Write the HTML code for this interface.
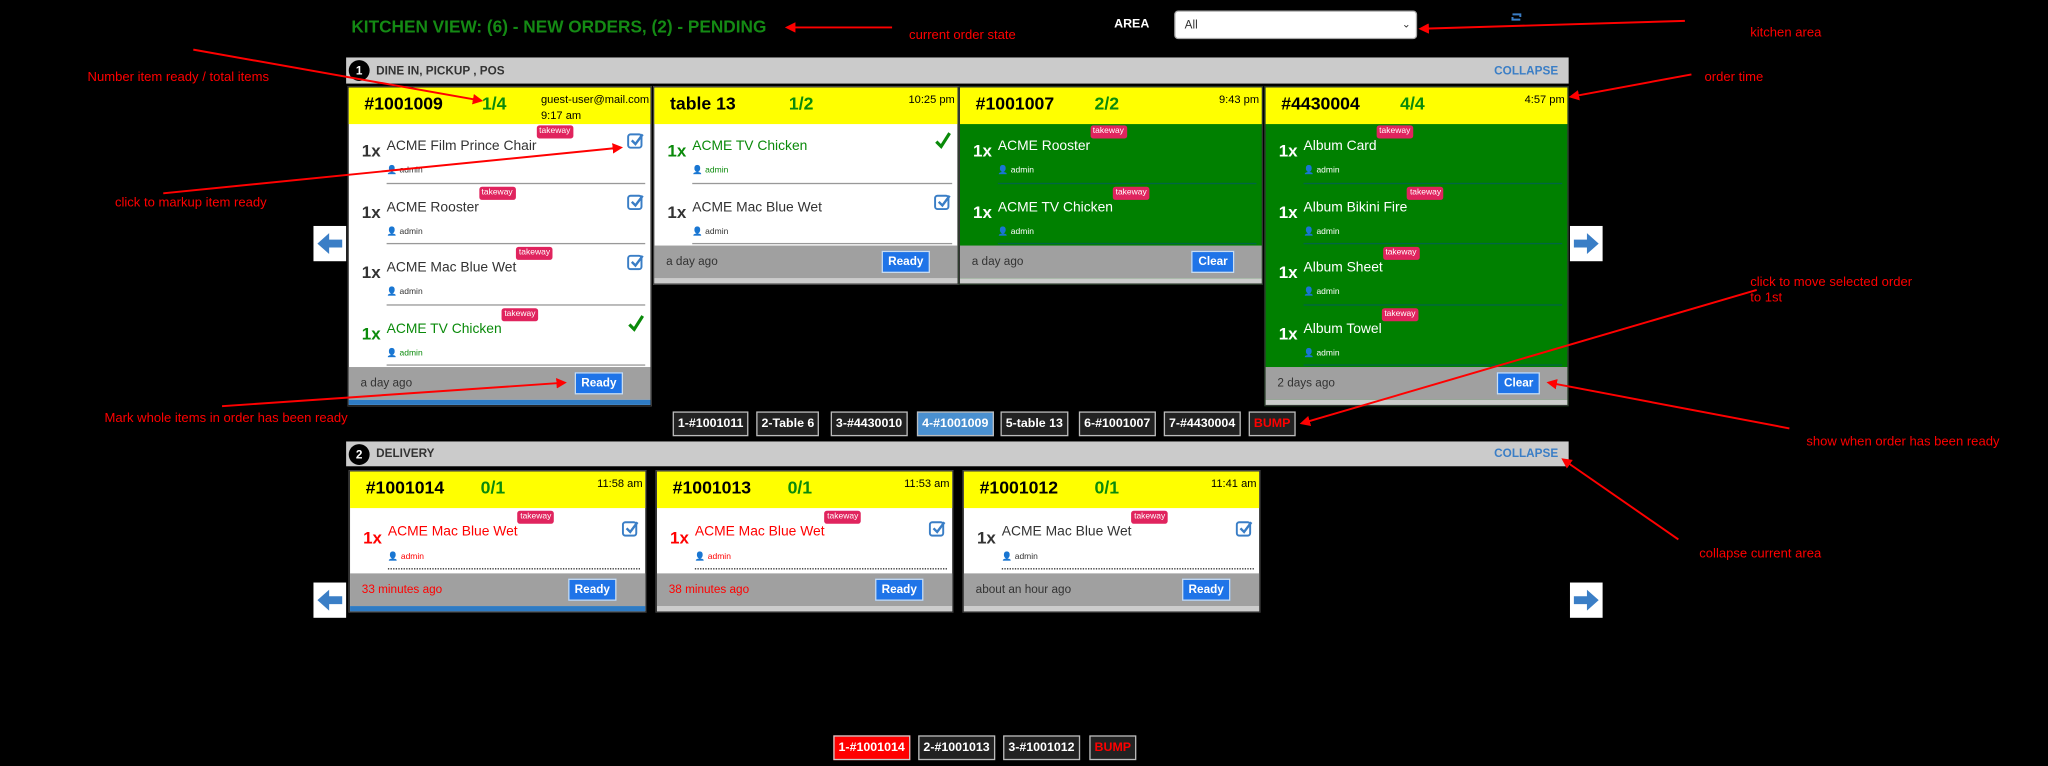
<!DOCTYPE html>
<html><head><meta charset="utf-8"><style>
*{box-sizing:border-box;margin:0;padding:0}
html,body{width:2048px;height:766px;background:#000;overflow:hidden;font-family:"Liberation Sans",Arial,sans-serif}
#s{position:absolute;left:0;top:0;width:1568px;height:586px;transform:scale(1.306122);transform-origin:0 0}
.a{position:absolute}
.title{left:269px;top:13px;color:#148a14;font-weight:bold;font-size:13.2px}
.ann{color:#f00;font-size:10px;position:absolute;line-height:12px}
.sec{position:absolute;left:265px;width:936px;height:20px;background:#cbcbcb;font-size:9px;font-weight:bold;color:#333;line-height:20px}
.sec .n{position:absolute;left:2px;top:2px;width:16px;height:16px;border-radius:8px;background:#000;color:#fff;text-align:center;line-height:16px;font-size:9px}
.sec .t{position:absolute;left:23px}
.sec .c{position:absolute;right:8px;color:#3a7ec6;font-size:9px}
.card{position:absolute;background:#fff;width:231px;border:1px solid #333}
.hd{height:28px;background:#ff0;position:relative}
.hd .id{position:absolute;left:12px;top:5px;font-weight:bold;font-size:13.5px;color:#000}
.hd .cnt{position:absolute;top:5px;font-weight:bold;font-size:13.5px;color:#0a8a0a}
.hd .tm{position:absolute;right:2px;top:3px;font-size:8.5px;color:#000;line-height:12px}
.it{position:relative;height:46.5px}
.it .q{position:absolute;left:10px;top:13px;font-weight:bold;font-size:13px;color:#333}
.it .nm{position:absolute;left:29px;top:11px;font-size:10.6px;color:#333}
.bd{position:absolute;left:100%;top:-10px;background:#e0245e;color:#fff;font-size:6.5px;padding:1px 2px;border-radius:2px;white-space:nowrap;line-height:8px}
.it .ad{position:absolute;left:29px;top:31px;font-size:6.5px;color:#333}
.it .ln{position:absolute;left:29px;right:4px;bottom:1px;border-top:1px solid #999}
.it .ck{position:absolute;right:5px;top:6px;width:13px;height:13px}
.g .q,.g .nm,.g .ad{color:#0a8a0a}
.r .q,.r .nm,.r .ad{color:#f00}
.gr .it .q,.gr .it .nm,.gr .it .ad{color:#fff}
.gr .it .ln{border-top:1px solid #064}
.ft{position:relative;height:25px;background:#a0a0a0;font-size:9px;color:#333;line-height:25px;padding-left:9px}
.btn{position:absolute;right:21px;top:4px;height:17px;background:#1f74e8;color:#fff;font-weight:bold;font-size:9px;line-height:15px;padding:0 4px;border:1px solid #cde}
.bar{height:4px;background:#ccc}
.bar.b{background:#2e7bc4}
.pg{position:absolute;height:19px;border:1px solid #bbb;background:#222;color:#fff;font-weight:bold;font-size:9.5px;line-height:17px;padding:0 3px}
.arr{position:absolute;width:25px;height:27px;background:#fff}
</style></head><body><div id="s">
<div class="a title">KITCHEN VIEW: (6) - NEW ORDERS, (2) - PENDING</div>
<div class="a" style="left:853px;top:13px;color:#fff;font-weight:bold;font-size:9.5px">AREA</div>
<div class="a" style="left:899px;top:8px;width:186px;height:22px;background:#fff;border-radius:3px;border:1px solid #aaa;font-size:9px;line-height:20px;padding-left:7px;color:#333">All<span style="position:absolute;right:4px;font-size:8px">&#8964;</span></div>
<svg class="a" style="left:1156px;top:8px" width="10" height="10" viewBox="0 0 10 10"><path d="M2 3h6v2M8 7H2V5" fill="none" stroke="#3a7ec6" stroke-width="1.5"/></svg>

<div class="sec" style="top:44px"><span class="n">1</span><span class="t">DINE IN, PICKUP , POS</span><span class="c">COLLAPSE</span></div>

<div class="card" style="left:266px;top:66px;width:233px;border-color:#222">
<div class="hd"><span class="id">#1001009</span><span class="cnt" style="left:102px">1/4</span><span class="tm" style="right:1px">guest-user@mail.com<br>9:17 am</span></div>
<div class="it"><span class="q">1x</span><span class="nm">ACME Film Prince Chair<span class="bd">takeway</span></span><span class="ad">&#128100; admin</span><span class="ln"></span><svg class="ck" viewBox="0 0 14 14"><rect x="1" y="2" width="11" height="11" rx="2" fill="none" stroke="#3a7ec6" stroke-width="1.6"/><path d="M4 7l3 3 6-8" fill="none" stroke="#3a7ec6" stroke-width="2"/></svg></div>
<div class="it"><span class="q">1x</span><span class="nm">ACME Rooster<span class="bd">takeway</span></span><span class="ad">&#128100; admin</span><span class="ln"></span><svg class="ck" viewBox="0 0 14 14"><rect x="1" y="2" width="11" height="11" rx="2" fill="none" stroke="#3a7ec6" stroke-width="1.6"/><path d="M4 7l3 3 6-8" fill="none" stroke="#3a7ec6" stroke-width="2"/></svg></div>
<div class="it"><span class="q">1x</span><span class="nm">ACME Mac Blue Wet<span class="bd">takeway</span></span><span class="ad">&#128100; admin</span><span class="ln"></span><svg class="ck" viewBox="0 0 14 14"><rect x="1" y="2" width="11" height="11" rx="2" fill="none" stroke="#3a7ec6" stroke-width="1.6"/><path d="M4 7l3 3 6-8" fill="none" stroke="#3a7ec6" stroke-width="2"/></svg></div>
<div class="it g"><span class="q">1x</span><span class="nm">ACME TV Chicken<span class="bd">takeway</span></span><span class="ad">&#128100; admin</span><span class="ln"></span><svg class="ck" viewBox="0 0 14 14"><path d="M2 8l4 4 7-11" fill="none" stroke="#0a8a0a" stroke-width="2.6"/></svg></div>
<div class="ft">a day ago<span class="btn">Ready</span></div>
<div class="bar b"></div>
</div>

<div class="card" style="left:500px;top:66px;width:234px">
<div class="hd"><span class="id">table 13</span><span class="cnt" style="left:103px">1/2</span><span class="tm">10:25 pm</span></div>
<div class="it g"><span class="q">1x</span><span class="nm">ACME TV Chicken</span><span class="ad">&#128100; admin</span><span class="ln"></span><svg class="ck" viewBox="0 0 14 14"><path d="M2 8l4 4 7-11" fill="none" stroke="#0a8a0a" stroke-width="2.6"/></svg></div>
<div class="it"><span class="q">1x</span><span class="nm">ACME Mac Blue Wet</span><span class="ad">&#128100; admin</span><span class="ln"></span><svg class="ck" viewBox="0 0 14 14"><rect x="1" y="2" width="11" height="11" rx="2" fill="none" stroke="#3a7ec6" stroke-width="1.6"/><path d="M4 7l3 3 6-8" fill="none" stroke="#3a7ec6" stroke-width="2"/></svg></div>
<div class="ft">a day ago<span class="btn">Ready</span></div>
<div class="bar"></div>
</div>

<div class="card gr" style="left:734px;top:66px;width:233px;background:#008000">
<div class="hd"><span class="id">#1001007</span><span class="cnt" style="left:103px">2/2</span><span class="tm">9:43 pm</span></div>
<div class="it"><span class="q">1x</span><span class="nm">ACME Rooster<span class="bd">takeway</span></span><span class="ad">&#128100; admin</span><span class="ln"></span></div>
<div class="it"><span class="q">1x</span><span class="nm">ACME TV Chicken<span class="bd">takeway</span></span><span class="ad">&#128100; admin</span><span class="ln"></span></div>
<div class="ft">a day ago<span class="btn">Clear</span></div>
<div class="bar"></div>
</div>

<div class="card gr" style="left:968px;top:66px;width:233px;background:#008000">
<div class="hd"><span class="id">#4430004</span><span class="cnt" style="left:103px">4/4</span><span class="tm">4:57 pm</span></div>
<div class="it"><span class="q">1x</span><span class="nm">Album Card<span class="bd">takeway</span></span><span class="ad">&#128100; admin</span><span class="ln"></span></div>
<div class="it"><span class="q">1x</span><span class="nm">Album Bikini Fire<span class="bd">takeway</span></span><span class="ad">&#128100; admin</span><span class="ln"></span></div>
<div class="it"><span class="q">1x</span><span class="nm">Album Sheet<span class="bd">takeway</span></span><span class="ad">&#128100; admin</span><span class="ln"></span></div>
<div class="it"><span class="q">1x</span><span class="nm">Album Towel<span class="bd">takeway</span></span><span class="ad">&#128100; admin</span><span class="ln"></span></div>
<div class="ft">2 days ago<span class="btn">Clear</span></div>
<div class="bar"></div>
</div>

<div class="arr" style="left:240px;top:173px"><svg width="25" height="27" viewBox="0 0 25 27"><path d="M3 13.5l9-8v5h10v6H12v5z" fill="#3a7ec6"/></svg></div>
<div class="arr" style="left:1202px;top:173px"><svg width="25" height="27" viewBox="0 0 25 27"><path d="M22 13.5l-9-8v5H3v6h10v5z" fill="#3a7ec6"/></svg></div>

<div class="pg" style="left:515px;top:315px">1-#1001011</div>
<div class="pg" style="left:579px;top:315px">2-Table 6</div>
<div class="pg" style="left:636px;top:315px">3-#4430010</div>
<div class="pg" style="left:702px;top:315px;background:#4a90d0">4-#1001009</div>
<div class="pg" style="left:766px;top:315px">5-table 13</div>
<div class="pg" style="left:826px;top:315px">6-#1001007</div>
<div class="pg" style="left:891px;top:315px">7-#4430004</div>
<div class="pg" style="left:956px;top:315px;color:#f00">BUMP</div>

<div class="sec" style="top:338px;height:19px;line-height:19px"><span class="n">2</span><span class="t">DELIVERY</span><span class="c">COLLAPSE</span></div>

<div class="card" style="left:267px;top:360px;width:228px">
<div class="hd"><span class="id">#1001014</span><span class="cnt" style="left:100px">0/1</span><span class="tm">11:58 am</span></div>
<div class="it r" style="height:50px"><span class="q" style="top:15px">1x</span><span class="nm" style="top:12px">ACME Mac Blue Wet<span class="bd">takeway</span></span><span class="ad" style="top:33px">&#128100; admin</span><span class="ln" style="bottom:3px;border-top:1px dotted #333"></span><svg class="ck" style="top:9px" viewBox="0 0 14 14"><rect x="1" y="2" width="11" height="11" rx="2" fill="none" stroke="#3a7ec6" stroke-width="1.6"/><path d="M4 7l3 3 6-8" fill="none" stroke="#3a7ec6" stroke-width="2"/></svg></div>
<div class="ft" style="color:#f00">33 minutes ago<span class="btn" style="right:22px">Ready</span></div>
<div class="bar b"></div>
</div>
<div class="card" style="left:502px;top:360px;width:228px">
<div class="hd"><span class="id">#1001013</span><span class="cnt" style="left:100px">0/1</span><span class="tm">11:53 am</span></div>
<div class="it r" style="height:50px"><span class="q" style="top:15px">1x</span><span class="nm" style="top:12px">ACME Mac Blue Wet<span class="bd">takeway</span></span><span class="ad" style="top:33px">&#128100; admin</span><span class="ln" style="bottom:3px;border-top:1px dotted #333"></span><svg class="ck" style="top:9px" viewBox="0 0 14 14"><rect x="1" y="2" width="11" height="11" rx="2" fill="none" stroke="#3a7ec6" stroke-width="1.6"/><path d="M4 7l3 3 6-8" fill="none" stroke="#3a7ec6" stroke-width="2"/></svg></div>
<div class="ft" style="color:#f00">38 minutes ago<span class="btn" style="right:22px">Ready</span></div>
<div class="bar"></div>
</div>
<div class="card" style="left:737px;top:360px;width:228px">
<div class="hd"><span class="id">#1001012</span><span class="cnt" style="left:100px">0/1</span><span class="tm">11:41 am</span></div>
<div class="it" style="height:50px"><span class="q" style="top:15px">1x</span><span class="nm" style="top:12px">ACME Mac Blue Wet<span class="bd">takeway</span></span><span class="ad" style="top:33px">&#128100; admin</span><span class="ln" style="bottom:3px;border-top:1px dotted #333"></span><svg class="ck" style="top:9px" viewBox="0 0 14 14"><rect x="1" y="2" width="11" height="11" rx="2" fill="none" stroke="#3a7ec6" stroke-width="1.6"/><path d="M4 7l3 3 6-8" fill="none" stroke="#3a7ec6" stroke-width="2"/></svg></div>
<div class="ft">about an hour ago<span class="btn" style="right:22px">Ready</span></div>
<div class="bar"></div>
</div>

<div class="arr" style="left:240px;top:446px"><svg width="25" height="27" viewBox="0 0 25 27"><path d="M3 13.5l9-8v5h10v6H12v5z" fill="#3a7ec6"/></svg></div>
<div class="arr" style="left:1202px;top:446px"><svg width="25" height="27" viewBox="0 0 25 27"><path d="M22 13.5l-9-8v5H3v6h10v5z" fill="#3a7ec6"/></svg></div>

<div class="pg" style="left:638px;top:563px;background:#f00;border-color:#ccc">1-#1001014</div>
<div class="pg" style="left:703px;top:563px">2-#1001013</div>
<div class="pg" style="left:768px;top:563px">3-#1001012</div>
<div class="pg" style="left:834px;top:563px;color:#f00">BUMP</div>

<div class="ann" style="left:696px;top:22px">current order state</div>
<div class="ann" style="left:1340px;top:20px">kitchen area</div>
<div class="ann" style="left:67px;top:54px">Number item ready / total items</div>
<div class="ann" style="left:1305px;top:54px">order time</div>
<div class="ann" style="left:88px;top:150px">click to markup item ready</div>
<div class="ann" style="left:1340px;top:211px">click to move selected order<br>to 1st</div>
<div class="ann" style="left:80px;top:315px">Mark whole items in order has been ready</div>
<div class="ann" style="left:1383px;top:333px">show when order has been ready</div>
<div class="ann" style="left:1301px;top:419px">collapse current area</div>

<svg class="a" style="left:0;top:0" width="1568" height="586" viewBox="0 0 1568 586">
<defs><marker id="h" markerWidth="8" markerHeight="8" refX="6" refY="4" orient="auto" markerUnits="userSpaceOnUse"><path d="M0 0L8 4L0 8z" fill="#f00"/></marker></defs>
<g stroke="#f00" stroke-width="1.5" fill="none" marker-end="url(#h)">
<line x1="683" y1="21" x2="603" y2="21"/>
<line x1="1290" y1="16" x2="1088" y2="22"/>
<line x1="148" y1="38" x2="368" y2="77"/>
<line x1="1295" y1="57" x2="1203" y2="74"/>
<line x1="125" y1="148" x2="475" y2="113"/>
<line x1="170" y1="311" x2="432" y2="293"/>
<line x1="1345" y1="222" x2="997" y2="324"/>
<line x1="1370" y1="328" x2="1186" y2="293"/>
<line x1="1285" y1="413" x2="1197" y2="352"/>
</g></svg>
</div></body></html>
